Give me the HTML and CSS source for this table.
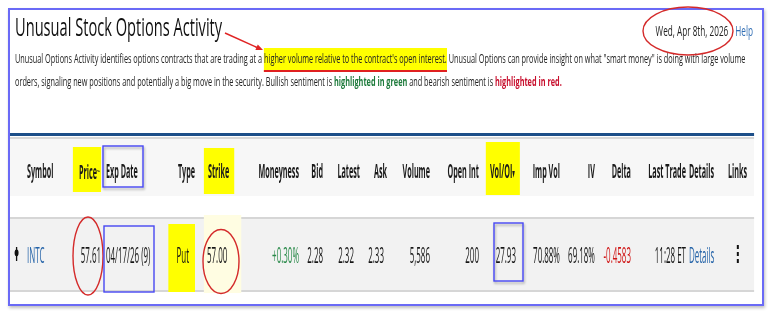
FILE: index.html
```html
<!DOCTYPE html>
<html lang="en">
<head>
<meta charset="utf-8">
<title>Unusual Stock Options Activity</title>
<link rel="stylesheet" href="styles.css">
</head>
<body>
<div class="panel">
  <div class="intro">
    <div class="title-row">
      <h1 class="title">Unusual Stock Options Activity</h1>
      <div class="meta"><span class="date">Wed, Apr 8th, 2026</span><a class="help">Help</a></div>
    </div>
    <p class="desc">Unusual Options Activity identifies options contracts that are trading at a <span class="hl">higher volume relative to the contract's open interest.</span> Unusual Options can provide insight on what "smart money" is doing with large volume orders, signaling new positions and potentially a big move in the security. Bullish sentiment is <b class="bull">highlighted in green</b> and bearish sentiment is <b class="bear">highlighted in red.</b></p>
  </div>
  <div class="table">
    <div class="thead">
      <div class="row hrow">
        <div class="th c-pin"></div>
        <div class="th c-sym">Symbol</div>
        <div class="th c-price"><span class="ymark y-price">Price<span class="sort">~</span></span></div>
        <div class="th c-exp">Exp Date</div>
        <div class="th c-type">Type</div>
        <div class="th c-strike"><span class="ymark y-strike">Strike</span></div>
        <div class="th c-mny">Moneyness</div>
        <div class="th c-bid">Bid</div>
        <div class="th c-lat">Latest</div>
        <div class="th c-ask">Ask</div>
        <div class="th c-vol">Volume</div>
        <div class="th c-oi">Open Int</div>
        <div class="th c-voi"><span class="ymark y-voi">Vol/OI<span class="caret">&#9662;</span></span></div>
        <div class="th c-imp">Imp Vol</div>
        <div class="th c-iv">IV</div>
        <div class="th c-delta">Delta</div>
        <div class="th c-last">Last Trade</div>
        <div class="th c-det">Details</div>
        <div class="th c-links">Links</div>
      </div>
    </div>
    <div class="tbody">
      <div class="row brow">
        <div class="td c-pin"><svg class="pin" viewBox="0 0 10 14" preserveAspectRatio="none"><line x1="4" y1="0" x2="4" y2="14" stroke="#111" stroke-width="1.3"/><ellipse cx="4" cy="6" rx="2" ry="3.4" fill="#111"/></svg></div>
        <div class="td c-sym"><a class="link">INTC</a></div>
        <div class="td c-price">57.61</div>
        <div class="td c-exp">04/17/26 (9)</div>
        <div class="td c-type"><span class="ymark y-put">Put</span></div>
        <div class="td c-strike"><span class="lmark">57.00</span></div>
        <div class="td c-mny up">+0.30%</div>
        <div class="td c-bid">2.28</div>
        <div class="td c-lat">2.32</div>
        <div class="td c-ask">2.33</div>
        <div class="td c-vol">5,586</div>
        <div class="td c-oi">200</div>
        <div class="td c-voi">27.93</div>
        <div class="td c-imp">70.88%</div>
        <div class="td c-iv">69.18%</div>
        <div class="td c-delta down">-0.4583</div>
        <div class="td c-last">11:28 ET</div>
        <div class="td c-det"><a class="link">Details</a></div>
        <div class="td c-links"><svg class="dots" viewBox="0 0 6 18" preserveAspectRatio="none"><rect x="2" y="0" width="2" height="4" fill="#111"/><rect x="2" y="7" width="2" height="4" fill="#111"/><rect x="2" y="14" width="2" height="4" fill="#111"/></svg></div>
      </div>
    </div>
  </div>
</div>
<svg class="marks" viewBox="0 0 768 312" width="768" height="312">
  <defs>
    <filter id="sh" x="-30%" y="-30%" width="160%" height="160%">
      <feDropShadow dx="1" dy="2" stdDeviation="1.2" flood-color="#000" flood-opacity="0.3"/>
    </filter>
  </defs>
  <line x1="225" y1="33" x2="257" y2="47.5" stroke="#e02424" stroke-width="1.5"/>
  <polygon points="263,50 255.4,49.9 257.8,44.5" fill="#e02424"/>
  <ellipse cx="688" cy="31" rx="45" ry="24" fill="none" stroke="#d42a2a" stroke-width="1.4"/>
  <ellipse cx="88" cy="256" rx="15" ry="39" fill="none" stroke="#d42a2a" stroke-width="1.4"/>
  <ellipse cx="221" cy="261.5" rx="18" ry="32" fill="none" stroke="#d42a2a" stroke-width="1.4"/>
  <rect x="103" y="146" width="40" height="41" fill="none" stroke="#4848f2" stroke-width="1.4" filter="url(#sh)"/>
  <rect x="104" y="226" width="50" height="66" fill="none" stroke="#4848f2" stroke-width="1.4"/>
  <rect x="494" y="223" width="29" height="58" fill="none" stroke="#4848f2" stroke-width="1.4" filter="url(#sh)"/>
</svg>
</body>
</html>
```
FILE: styles.css
```css
:root {
  --is: 0.585;
  --ts: 0.37;
}
html, body {
  margin: 0;
  padding: 0;
  background: #fff;
  overflow: hidden;
}
body {
  position: relative;
  width: 768px;
  height: 312px;
  font-family: "Open Sans", "DejaVu Sans", sans-serif;
  color: #1a1a1a;
}
.panel {
  margin: 8px 0 0 8px;
  width: 752px;
  height: 294px;
  border: 2px solid #6a6af6;
  box-shadow: 1px 2px 3px rgba(0,0,0,0.25);
  overflow: hidden;
}

/* intro block (condensed) */
.intro {
  box-sizing: border-box;
  width: calc(752px / var(--is));
  height: 123px;
  padding: 1px calc(9px / var(--is)) 0 calc(5px / var(--is));
  transform: scaleX(var(--is));
  transform-origin: 0 0;
}
.title-row {
  display: flex;
  justify-content: space-between;
  align-items: baseline;
}
.title {
  margin: 0;
  font-size: 25px;
  line-height: 30px;
  font-weight: 400;
  color: #111;
}
.meta {
  font-size: 14px;
}
.date {
  color: #222;
  margin-right: calc(7px / var(--is));
}
.help {
  color: #2f6db4;
}
.desc {
  margin: 6.3px 0 0;
  font-size: 12.5px;
  line-height: 23px;
  color: #222;
}
.hl {
  background: #ffff00;
  padding: 2px 0 3px;
  border-bottom: 2px solid #e02020;
}
.bull { color: #1e7b3c; font-weight: 700; }
.bear { color: #c8102e; font-weight: 700; }

/* table (condensed) */
.table {
  width: calc(744px / var(--ts));
  transform: scaleX(var(--ts));
  transform-origin: 0 0;
}
.thead {
  border-top: 3px solid #1d4f89;
  padding-top: 1px;
}
.row {
  display: grid;
  grid-template-columns:
    calc(15px / var(--ts)) calc(37px / var(--ts)) calc(39px / var(--ts))
    calc(54px / var(--ts)) calc(45px / var(--ts)) calc(45px / var(--ts))
    calc(55px / var(--ts)) calc(24px / var(--ts)) calc(38px / var(--ts))
    calc(25px / var(--ts)) calc(44px / var(--ts)) calc(49px / var(--ts))
    calc(42px / var(--ts)) calc(38px / var(--ts)) calc(35px / var(--ts))
    calc(36px / var(--ts)) calc(55px / var(--ts)) calc(36px / var(--ts))
    calc(32px / var(--ts));
}
.hrow {
  border-top: 2px solid #d8d8d8;
  background: #f7f7f7;
  height: 57px;
}
.tbody {
  padding-top: 21px;
}
.brow {
  border-top: 2px solid #d6d6d6;
  border-bottom: 2px solid #d6d6d6;
  background: #f2f2f2;
  height: 71px;
}
.th, .td {
  white-space: nowrap;
  text-align: left;
}
.th {
  box-sizing: border-box;
  padding-top: 6px;
  font-size: 19.5px;
  line-height: 51px;
  font-weight: 700;
  color: #1a1a1a;
}
.td {
  font-size: 21.5px;
  line-height: 71px;
  color: #151515;
}
.sort { font-size: 14px; font-weight: 400; vertical-align: 3px; }
.caret { font-size: 14px; }
.ymark { background: #ffff00; }
.y-price { padding: 11px calc(1px / var(--ts)) 7px calc(6px / var(--ts)); }
.y-strike { padding: 9px calc(5px / var(--ts)) 10px calc(4px / var(--ts)); }
.y-voi { padding: 15px calc(5px / var(--ts)) 11px calc(4px / var(--ts)); }
.y-put { padding: 16px calc(6px / var(--ts)) 23px calc(8px / var(--ts)); }
.lmark {
  background: #fffde2;
  padding: 25px calc(14px / var(--ts)) 24px calc(3px / var(--ts));
}
.link { color: #2463a8; }
.up { color: #2a8a4a; }
.down { color: #d01414; }
.pin {
  width: calc(10px / var(--ts));
  height: 14px;
  vertical-align: 2px;
}
.dots {
  width: calc(6px / var(--ts));
  height: 18px;
  vertical-align: 0;
}

/* column alignment */
.c-pin { text-align: center; }
.c-sym { padding-left: calc(2px / var(--ts)); }
.c-price { text-align: right; }
.c-exp { padding-left: calc(5px / var(--ts)); }
.c-type { text-align: right; padding-right: calc(5px / var(--ts)); }
.c-strike { padding-left: calc(4px / var(--ts)); }
.c-mny { text-align: right; padding-right: calc(1px / var(--ts)); }
.c-bid { text-align: right; padding-right: calc(1px / var(--ts)); }
.c-lat { text-align: right; padding-right: calc(2px / var(--ts)); }
.td.c-lat { padding-right: calc(8px / var(--ts)); }
.c-ask { text-align: right; }
.td.c-ask { padding-right: calc(3px / var(--ts)); }
.c-vol { text-align: right; padding-right: calc(1px / var(--ts)); }
.c-oi { text-align: right; padding-right: calc(1px / var(--ts)); }
.c-voi { text-align: right; padding-right: calc(2px / var(--ts)); }
.td.c-voi { padding-right: calc(6px / var(--ts)); }
.c-imp { text-align: right; }
.c-iv { text-align: right; }
.c-delta { text-align: right; }
.c-last { text-align: right; }
.c-det { padding-left: calc(3px / var(--ts)); }
.c-links { padding-left: calc(6px / var(--ts)); }
.td.c-links { text-align: center; padding-left: 0; }

/* annotation overlay */
.marks {
  position: absolute;
  left: 0;
  top: 0;
  pointer-events: none;
}
```
